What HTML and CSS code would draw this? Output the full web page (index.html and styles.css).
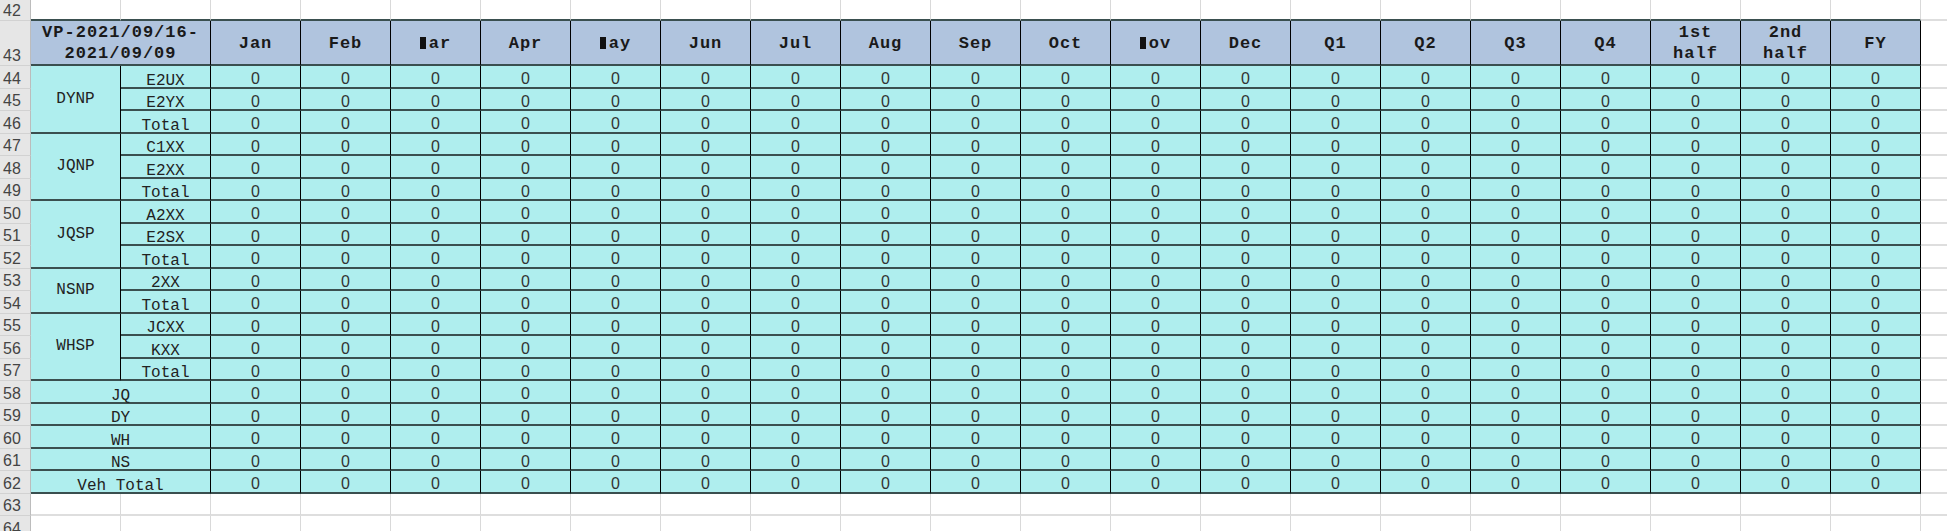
FILE: index.html
```html
<!DOCTYPE html>
<html>
<head>
<meta charset="utf-8">
<link rel="stylesheet" href="styles.css">
</head>
<body>
<div class="sheet">
  <div class="rh">42</div>
  <div class="g t"></div><div class="g t"></div><div class="g t"></div><div class="g t"></div><div class="g t"></div><div class="g t"></div><div class="g t"></div><div class="g t"></div><div class="g t"></div><div class="g t"></div><div class="g t"></div><div class="g t"></div><div class="g t"></div><div class="g t"></div><div class="g t"></div><div class="g t"></div><div class="g t"></div><div class="g t"></div><div class="g t"></div><div class="g t"></div><div class="g t"></div><div class="g"></div>

  <div class="rh">43</div>
  <div class="h span2">VP-2021/09/16-<br>2021/09/09</div>
  <div class="h">Jan</div><div class="h">Feb</div><div class="h"><span class="blk">M</span>ar</div><div class="h">Apr</div><div class="h"><span class="blk">M</span>ay</div><div class="h">Jun</div><div class="h">Jul</div><div class="h">Aug</div><div class="h">Sep</div><div class="h">Oct</div><div class="h"><span class="blk">N</span>ov</div><div class="h">Dec</div><div class="h">Q1</div><div class="h">Q2</div><div class="h">Q3</div><div class="h">Q4</div><div class="h">1st<br>half</div><div class="h">2nd<br>half</div><div class="h">FY</div>
  <div class="g"></div>

  <div class="rh">44</div>
  <div class="c lbl grp r3">DYNP</div>
  <div class="c lbl">E2UX</div>
  <div class="c">0</div><div class="c">0</div><div class="c">0</div><div class="c">0</div><div class="c">0</div><div class="c">0</div><div class="c">0</div><div class="c">0</div><div class="c">0</div><div class="c">0</div><div class="c">0</div><div class="c">0</div><div class="c">0</div><div class="c">0</div><div class="c">0</div><div class="c">0</div><div class="c">0</div><div class="c">0</div><div class="c">0</div>
  <div class="g"></div>

  <div class="rh">45</div>
  <div class="c lbl">E2YX</div>
  <div class="c">0</div><div class="c">0</div><div class="c">0</div><div class="c">0</div><div class="c">0</div><div class="c">0</div><div class="c">0</div><div class="c">0</div><div class="c">0</div><div class="c">0</div><div class="c">0</div><div class="c">0</div><div class="c">0</div><div class="c">0</div><div class="c">0</div><div class="c">0</div><div class="c">0</div><div class="c">0</div><div class="c">0</div>
  <div class="g"></div>

  <div class="rh">46</div>
  <div class="c lbl">Total</div>
  <div class="c">0</div><div class="c">0</div><div class="c">0</div><div class="c">0</div><div class="c">0</div><div class="c">0</div><div class="c">0</div><div class="c">0</div><div class="c">0</div><div class="c">0</div><div class="c">0</div><div class="c">0</div><div class="c">0</div><div class="c">0</div><div class="c">0</div><div class="c">0</div><div class="c">0</div><div class="c">0</div><div class="c">0</div>
  <div class="g"></div>

  <div class="rh">47</div>
  <div class="c lbl grp r3">JQNP</div>
  <div class="c lbl">C1XX</div>
  <div class="c">0</div><div class="c">0</div><div class="c">0</div><div class="c">0</div><div class="c">0</div><div class="c">0</div><div class="c">0</div><div class="c">0</div><div class="c">0</div><div class="c">0</div><div class="c">0</div><div class="c">0</div><div class="c">0</div><div class="c">0</div><div class="c">0</div><div class="c">0</div><div class="c">0</div><div class="c">0</div><div class="c">0</div>
  <div class="g"></div>

  <div class="rh">48</div>
  <div class="c lbl">E2XX</div>
  <div class="c">0</div><div class="c">0</div><div class="c">0</div><div class="c">0</div><div class="c">0</div><div class="c">0</div><div class="c">0</div><div class="c">0</div><div class="c">0</div><div class="c">0</div><div class="c">0</div><div class="c">0</div><div class="c">0</div><div class="c">0</div><div class="c">0</div><div class="c">0</div><div class="c">0</div><div class="c">0</div><div class="c">0</div>
  <div class="g"></div>

  <div class="rh">49</div>
  <div class="c lbl">Total</div>
  <div class="c">0</div><div class="c">0</div><div class="c">0</div><div class="c">0</div><div class="c">0</div><div class="c">0</div><div class="c">0</div><div class="c">0</div><div class="c">0</div><div class="c">0</div><div class="c">0</div><div class="c">0</div><div class="c">0</div><div class="c">0</div><div class="c">0</div><div class="c">0</div><div class="c">0</div><div class="c">0</div><div class="c">0</div>
  <div class="g"></div>

  <div class="rh">50</div>
  <div class="c lbl grp r3">JQSP</div>
  <div class="c lbl">A2XX</div>
  <div class="c">0</div><div class="c">0</div><div class="c">0</div><div class="c">0</div><div class="c">0</div><div class="c">0</div><div class="c">0</div><div class="c">0</div><div class="c">0</div><div class="c">0</div><div class="c">0</div><div class="c">0</div><div class="c">0</div><div class="c">0</div><div class="c">0</div><div class="c">0</div><div class="c">0</div><div class="c">0</div><div class="c">0</div>
  <div class="g"></div>

  <div class="rh">51</div>
  <div class="c lbl">E2SX</div>
  <div class="c">0</div><div class="c">0</div><div class="c">0</div><div class="c">0</div><div class="c">0</div><div class="c">0</div><div class="c">0</div><div class="c">0</div><div class="c">0</div><div class="c">0</div><div class="c">0</div><div class="c">0</div><div class="c">0</div><div class="c">0</div><div class="c">0</div><div class="c">0</div><div class="c">0</div><div class="c">0</div><div class="c">0</div>
  <div class="g"></div>

  <div class="rh">52</div>
  <div class="c lbl">Total</div>
  <div class="c">0</div><div class="c">0</div><div class="c">0</div><div class="c">0</div><div class="c">0</div><div class="c">0</div><div class="c">0</div><div class="c">0</div><div class="c">0</div><div class="c">0</div><div class="c">0</div><div class="c">0</div><div class="c">0</div><div class="c">0</div><div class="c">0</div><div class="c">0</div><div class="c">0</div><div class="c">0</div><div class="c">0</div>
  <div class="g"></div>

  <div class="rh">53</div>
  <div class="c lbl grp r2">NSNP</div>
  <div class="c lbl">2XX</div>
  <div class="c">0</div><div class="c">0</div><div class="c">0</div><div class="c">0</div><div class="c">0</div><div class="c">0</div><div class="c">0</div><div class="c">0</div><div class="c">0</div><div class="c">0</div><div class="c">0</div><div class="c">0</div><div class="c">0</div><div class="c">0</div><div class="c">0</div><div class="c">0</div><div class="c">0</div><div class="c">0</div><div class="c">0</div>
  <div class="g"></div>

  <div class="rh">54</div>
  <div class="c lbl">Total</div>
  <div class="c">0</div><div class="c">0</div><div class="c">0</div><div class="c">0</div><div class="c">0</div><div class="c">0</div><div class="c">0</div><div class="c">0</div><div class="c">0</div><div class="c">0</div><div class="c">0</div><div class="c">0</div><div class="c">0</div><div class="c">0</div><div class="c">0</div><div class="c">0</div><div class="c">0</div><div class="c">0</div><div class="c">0</div>
  <div class="g"></div>

  <div class="rh">55</div>
  <div class="c lbl grp r3">WHSP</div>
  <div class="c lbl">JCXX</div>
  <div class="c">0</div><div class="c">0</div><div class="c">0</div><div class="c">0</div><div class="c">0</div><div class="c">0</div><div class="c">0</div><div class="c">0</div><div class="c">0</div><div class="c">0</div><div class="c">0</div><div class="c">0</div><div class="c">0</div><div class="c">0</div><div class="c">0</div><div class="c">0</div><div class="c">0</div><div class="c">0</div><div class="c">0</div>
  <div class="g"></div>

  <div class="rh">56</div>
  <div class="c lbl">KXX</div>
  <div class="c">0</div><div class="c">0</div><div class="c">0</div><div class="c">0</div><div class="c">0</div><div class="c">0</div><div class="c">0</div><div class="c">0</div><div class="c">0</div><div class="c">0</div><div class="c">0</div><div class="c">0</div><div class="c">0</div><div class="c">0</div><div class="c">0</div><div class="c">0</div><div class="c">0</div><div class="c">0</div><div class="c">0</div>
  <div class="g"></div>

  <div class="rh">57</div>
  <div class="c lbl">Total</div>
  <div class="c">0</div><div class="c">0</div><div class="c">0</div><div class="c">0</div><div class="c">0</div><div class="c">0</div><div class="c">0</div><div class="c">0</div><div class="c">0</div><div class="c">0</div><div class="c">0</div><div class="c">0</div><div class="c">0</div><div class="c">0</div><div class="c">0</div><div class="c">0</div><div class="c">0</div><div class="c">0</div><div class="c">0</div>
  <div class="g"></div>

  <div class="rh">58</div>
  <div class="c lbl span2">JQ</div>
  <div class="c">0</div><div class="c">0</div><div class="c">0</div><div class="c">0</div><div class="c">0</div><div class="c">0</div><div class="c">0</div><div class="c">0</div><div class="c">0</div><div class="c">0</div><div class="c">0</div><div class="c">0</div><div class="c">0</div><div class="c">0</div><div class="c">0</div><div class="c">0</div><div class="c">0</div><div class="c">0</div><div class="c">0</div>
  <div class="g"></div>

  <div class="rh">59</div>
  <div class="c lbl span2">DY</div>
  <div class="c">0</div><div class="c">0</div><div class="c">0</div><div class="c">0</div><div class="c">0</div><div class="c">0</div><div class="c">0</div><div class="c">0</div><div class="c">0</div><div class="c">0</div><div class="c">0</div><div class="c">0</div><div class="c">0</div><div class="c">0</div><div class="c">0</div><div class="c">0</div><div class="c">0</div><div class="c">0</div><div class="c">0</div>
  <div class="g"></div>

  <div class="rh">60</div>
  <div class="c lbl span2">WH</div>
  <div class="c">0</div><div class="c">0</div><div class="c">0</div><div class="c">0</div><div class="c">0</div><div class="c">0</div><div class="c">0</div><div class="c">0</div><div class="c">0</div><div class="c">0</div><div class="c">0</div><div class="c">0</div><div class="c">0</div><div class="c">0</div><div class="c">0</div><div class="c">0</div><div class="c">0</div><div class="c">0</div><div class="c">0</div>
  <div class="g"></div>

  <div class="rh">61</div>
  <div class="c lbl span2">NS</div>
  <div class="c">0</div><div class="c">0</div><div class="c">0</div><div class="c">0</div><div class="c">0</div><div class="c">0</div><div class="c">0</div><div class="c">0</div><div class="c">0</div><div class="c">0</div><div class="c">0</div><div class="c">0</div><div class="c">0</div><div class="c">0</div><div class="c">0</div><div class="c">0</div><div class="c">0</div><div class="c">0</div><div class="c">0</div>
  <div class="g"></div>

  <div class="rh">62</div>
  <div class="c lbl span2">Veh Total</div>
  <div class="c">0</div><div class="c">0</div><div class="c">0</div><div class="c">0</div><div class="c">0</div><div class="c">0</div><div class="c">0</div><div class="c">0</div><div class="c">0</div><div class="c">0</div><div class="c">0</div><div class="c">0</div><div class="c">0</div><div class="c">0</div><div class="c">0</div><div class="c">0</div><div class="c">0</div><div class="c">0</div><div class="c">0</div>
  <div class="g"></div>

  <div class="rh">63</div>
  <div class="g"></div><div class="g"></div><div class="g"></div><div class="g"></div><div class="g"></div><div class="g"></div><div class="g"></div><div class="g"></div><div class="g"></div><div class="g"></div><div class="g"></div><div class="g"></div><div class="g"></div><div class="g"></div><div class="g"></div><div class="g"></div><div class="g"></div><div class="g"></div><div class="g"></div><div class="g"></div><div class="g"></div><div class="g"></div>

  <div class="rh">64</div>
  <div class="g"></div><div class="g"></div><div class="g"></div><div class="g"></div><div class="g"></div><div class="g"></div><div class="g"></div><div class="g"></div><div class="g"></div><div class="g"></div><div class="g"></div><div class="g"></div><div class="g"></div><div class="g"></div><div class="g"></div><div class="g"></div><div class="g"></div><div class="g"></div><div class="g"></div><div class="g"></div><div class="g"></div><div class="g"></div>
</div>
</body>
</html>
```

FILE: styles.css
```css
* {
  box-sizing: border-box;
  margin: 0;
  padding: 0;
}

html, body {
  background: #ffffff;
  overflow: hidden;
}

body {
  width: 1947px;
  height: 531px;
}

.sheet {
  display: grid;
  grid-template-columns: 31px repeat(22, 90px);
  grid-template-rows: 21px 45px repeat(21, 22.5px);
  font-family: "Liberation Mono", monospace;
  font-size: 16px;
  color: #222222;
}

.rh {
  background: #e6e6e6;
  border-right: 1px solid #bcbcbc;
  border-bottom: 1px solid #d2d2d2;
  font-family: "Liberation Sans", Arial, sans-serif;
  font-size: 16px;
  color: #444444;
  display: flex;
  align-items: flex-end;
  padding-left: 3px;
  padding-bottom: 3px;
  line-height: 12px;
}

.g {
  border-right: 1px solid #d9d9d9;
  border-bottom: 2px solid #dedede;
}

.g.t {
  border-bottom: 2px solid #3a4f4f;
}

.h {
  background: #b0c4de;
  border-right: 1px solid #000000;
  border-bottom: 2px solid #3a4f4f;
  display: flex;
  align-items: center;
  justify-content: center;
  text-align: center;
  font-weight: bold;
  font-size: 17px;
  letter-spacing: 1px;
  line-height: 21px;
  color: #1a1a1a;
  padding-top: 1px;
}

.blk {
  display: inline-block;
  width: 6px;
  height: 12px;
  margin-right: 3px;
  padding-top: 3px;
  background: #111111;
  color: transparent;
  font-size: 9px;
  line-height: 9px;
  letter-spacing: 0;
  vertical-align: 2px;
}

.c {
  background: #afeeee;
  border-right: 1px solid #000000;
  border-bottom: 2px solid #3a4f4f;
  display: flex;
  align-items: flex-end;
  justify-content: center;
  font-family: "Liberation Sans", Arial, sans-serif;
  color: #333333;
  line-height: 12px;
  padding-bottom: 1.5px;
  white-space: pre;
}

.c.lbl {
  font-family: "Liberation Mono", monospace;
  color: #222222;
  padding-bottom: 0;
}

.c.grp {
  align-items: center;
  line-height: 16px;
}

.span2 {
  grid-column: span 2;
}

.r2 {
  grid-row: span 2;
}

.r3 {
  grid-row: span 3;
}
```
